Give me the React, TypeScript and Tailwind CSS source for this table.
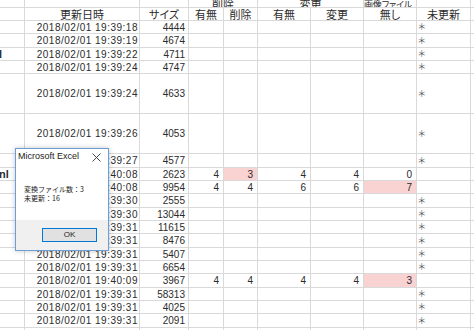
import React from 'react';

// column widths (include the 1px right border)
const W = [
  'w-[25px]',
  'w-[115px]',
  'w-[49px]',
  'w-[35px]',
  'w-[34px]',
  'w-[53px]',
  'w-[53px]',
  'w-[53px]',
  'w-[54px]',
];

const jp = "font-['Noto_Sans_CJK_JP',sans-serif] [font-feature-settings:'palt']";
const jpPlain = "font-['Noto_Sans_CJK_JP',sans-serif]";
const num = "font-['Liberation_Sans',Arial,sans-serif]";
const line = 'border-[#d9d9d9]';

interface Row {
  h: string;
  time: string;
  size: string;
  vals?: string[];
  pink?: number;
  star: boolean;
  left?: string;
}

const rows: Row[] = [
  { h: 'h-[13px]', time: '19:39:18', size: '4444', star: true },
  { h: 'h-[14px]', time: '19:39:19', size: '4674', star: true },
  { h: 'h-[13px]', time: '19:39:22', size: '4711', star: true, left: 'l' },
  { h: 'h-[13px]', time: '19:39:24', size: '4747', star: true },
  { h: 'h-[40px]', time: '19:39:24', size: '4633', star: true },
  { h: 'h-[40px]', time: '19:39:26', size: '4053', star: true },
  { h: 'h-[14px]', time: '19:39:27', size: '4577', star: true },
  { h: 'h-[13px]', time: '19:40:08', size: '2623', vals: ['4', '3', '4', '4', '0'], pink: 1, star: false, left: 'nl' },
  { h: 'h-[13px]', time: '19:40:08', size: '9954', vals: ['4', '4', '6', '6', '7'], pink: 4, star: false },
  { h: 'h-[14px]', time: '19:39:30', size: '2555', star: true },
  { h: 'h-[13px]', time: '19:39:30', size: '13044', star: true },
  { h: 'h-[13px]', time: '19:39:31', size: '11615', star: true },
  { h: 'h-[14px]', time: '19:39:31', size: '8476', star: true },
  { h: 'h-[13px]', time: '19:39:31', size: '5407', star: true },
  { h: 'h-[13px]', time: '19:39:31', size: '6654', star: true },
  { h: 'h-[14px]', time: '19:40:09', size: '3967', vals: ['4', '4', '4', '4', '3'], pink: 4, star: false },
  { h: 'h-[13px]', time: '19:39:31', size: '58313', star: true },
  { h: 'h-[13px]', time: '19:39:31', size: '4025', star: true },
  { h: 'h-[14px]', time: '19:39:31', size: '2091', star: true },
];

const headers = ['更新日時', 'サイズ', '有無', '削除', '有無', '変更', '無し', '未更新'];

const Cell = ({ w, className = '', children }: { w: string; className?: string; children?: React.ReactNode }) => (
  <div className={`${w} shrink-0 h-full border-r ${line} flex items-center overflow-hidden whitespace-nowrap ${className}`}>
    {children}
  </div>
);

const DataRow = ({ row }: { row: Row }) => (
  <div className={`flex ${row.h} border-b ${line} text-[#2b2b2b]`}>
    <Cell w={W[0]} className={`${num} text-[11px] font-bold`}>
      {row.left && <span className="-ml-[1px]">{row.left}</span>}
    </Cell>
    <Cell w={W[1]} className={`${num} text-[10px] tracking-[0.5px] justify-end pr-[1px]`}>
      2018/02/01 {row.time}
    </Cell>
    <Cell w={W[2]} className={`${num} text-[10px] justify-end pr-[3px]`}>
      {row.size}
    </Cell>
    {[3, 4, 5, 6, 7].map((c, i) => (
      <Cell
        key={c}
        w={W[c]}
        className={`${num} text-[10px] justify-end pr-[4px] ${row.pink === i ? 'bg-[#f9d2d2]' : ''}`}
      >
        {row.vals ? row.vals[i] : ''}
      </Cell>
    ))}
    <Cell w={W[8]} className={`${jp} text-[9px] pl-[1px] text-[#555]`}>
      {row.star ? '＊' : ''}
    </Cell>
    <div className="flex-1" />
  </div>
);

const Dialog = () => (
  <div className="absolute left-[15px] top-[148px] w-[94px] h-[103px] border border-[#6d9fd6] bg-white shadow-[0_0_5px_rgba(0,0,0,0.22)] flex flex-col">
    <div className="h-[16px] flex items-center justify-between pl-[2px] pr-[7px]">
      <span className={`${num} text-[9px] text-[#222]`}>Microsoft Excel</span>
      <svg width="9" height="9" viewBox="0 0 9 9">
        <path d="M0.5 0.5 L8.5 8.5 M8.5 0.5 L0.5 8.5" stroke="#333" strokeWidth="0.9" />
      </svg>
    </div>
    <div className={`flex-1 pt-[20px] pl-[8px] ${jpPlain} text-[7px] leading-[9px] text-[#222]`}>
      <div>変換ファイル数：3</div>
      <div>未更新：16</div>
    </div>
    <div className="h-[30px] bg-[#f0f0f0] pt-[8px] pl-[26px]">
      <div className={`w-[55px] h-[14px] border border-[#0078d7] bg-[#e1e1e1] flex items-center justify-center ${num} text-[8px] text-[#222]`}>
        OK
      </div>
    </div>
  </div>
);

export default function App() {
  return (
    <div className="relative w-[474px] h-[330px] overflow-hidden bg-white">
      {/* partially visible group header row */}
      <div className={`flex h-[8px] border-b ${line} ${jp} text-[11px] text-[#2b2b2b]`}>
        <Cell w={W[0]} />
        <Cell w={W[1]} />
        <Cell w={W[2]} />
        <Cell w="w-[69px]" className="justify-center items-end">
          <span className="leading-[11px] translate-y-[3px]">削除</span>
        </Cell>
        <Cell w="w-[106px]" className="justify-center items-end">
          <span className="leading-[11px] translate-y-[3px]">変更</span>
        </Cell>
        <Cell w={W[7]} className="justify-start items-end">
          <span className="text-[9px] leading-[9px] translate-y-[2px] tracking-[-0.2px]">画像ファイル</span>
        </Cell>
        <Cell w={W[8]} />
        <div className="flex-1" />
      </div>

      {/* column header row */}
      <div className={`flex h-[13px] border-b ${line} ${jp} text-[11px] text-[#2b2b2b]`}>
        <Cell w={W[0]} />
        {headers.map((t, i) => (
          <Cell key={i} w={W[i + 1]} className="justify-center">
            <span className="leading-[11px]">{t}</span>
          </Cell>
        ))}
        <div className="flex-1" />
      </div>

      {rows.map((r, i) => (
        <DataRow key={i} row={r} />
      ))}

      <div className="flex h-[10px]">
        {W.map((w, i) => (
          <Cell key={i} w={w} />
        ))}
      </div>

      <Dialog />
    </div>
  );
}
